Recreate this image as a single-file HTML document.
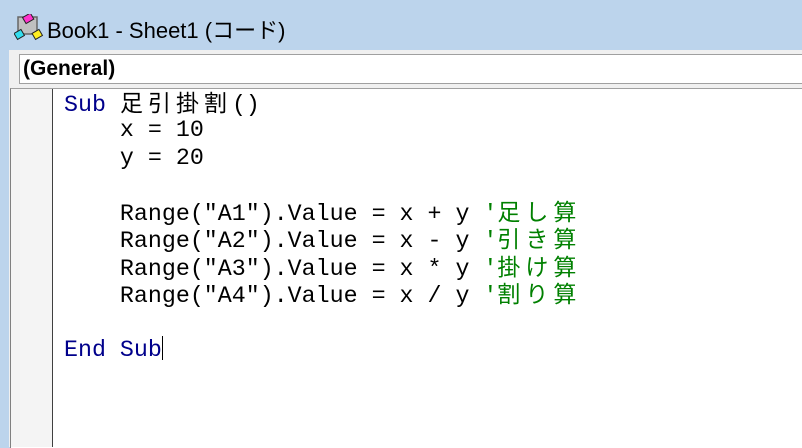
<!DOCTYPE html>
<html><head><meta charset="utf-8"><style>
body{margin:0;width:802px;height:447px;overflow:hidden;background:#bcd4ec;position:relative;font-family:"Liberation Sans","Noto Sans CJK JP",sans-serif}
#title{position:absolute;left:47px;top:13px;font-size:22px;color:#000}
#panel{position:absolute;left:9px;top:50px;width:793px;height:397px;background:#f0f0f0}
#combo{position:absolute;left:19px;top:54px;width:790px;height:30px;background:#fff;border:1px solid #a0a0a0;box-sizing:border-box;font-weight:bold;font-size:21px;line-height:28px;padding-left:3px}
#code{position:absolute;left:10px;top:88px;width:792px;height:359px;background:#fff;border-top:1px solid #a0a0a0;border-left:1px solid #808080}
#margin{position:absolute;left:11px;top:89px;width:41px;height:358px;background:#f4f4f4;border-right:1px solid #404040}
#pre{position:absolute;left:64px;top:90px;margin:0;font-family:"Liberation Mono","Noto Sans CJK JP",monospace;font-size:23.3px;color:#000;white-space:pre}
#pre div{height:27.3px;line-height:27.3px;overflow:visible}
.k{color:#00008b}.c{color:#008000}
.j{font-family:"Noto Sans CJK JP",sans-serif;font-size:23px;letter-spacing:5px;line-height:1}
.cur{display:inline-block;width:1px;height:24px;background:#000;vertical-align:-4px}
</style></head><body>
<svg style="position:absolute;left:14px;top:14px" width="30" height="28" viewBox="0 0 30 28">
<rect x="4" y="3" width="19" height="17" fill="#c0c0c0" stroke="#666" stroke-width="1.5"/>
<rect x="10" y="1" width="9" height="7" fill="#ff33cc" stroke="#222" transform="rotate(-30 14 5)"/>
<rect x="1" y="17" width="8" height="7" fill="#33ddee" stroke="#222" transform="rotate(-30 5 20)"/>
<rect x="19" y="17" width="8" height="7" fill="#ffee22" stroke="#222" transform="rotate(-30 23 20)"/>
</svg>
<div id="title">Book1 - Sheet1 (コード)</div>
<div id="panel"></div>
<div id="combo">(General)</div>
<div id="code"></div>
<div id="margin"></div>
<div id="pre"><div><span class="k">Sub</span> <span class="j">足引掛割</span>()</div><div>    x = 10</div><div>    y = 20</div><div> </div><div>    Range("A1").Value = x + y <span class="c">'<span class="j">足し算</span></span></div><div>    Range("A2").Value = x - y <span class="c">'<span class="j">引き算</span></span></div><div>    Range("A3").Value = x * y <span class="c">'<span class="j">掛け算</span></span></div><div>    Range("A4").Value = x / y <span class="c">'<span class="j">割り算</span></span></div><div> </div><div><span class="k">End Sub</span><span class="cur"></span></div></div>
</body></html>
